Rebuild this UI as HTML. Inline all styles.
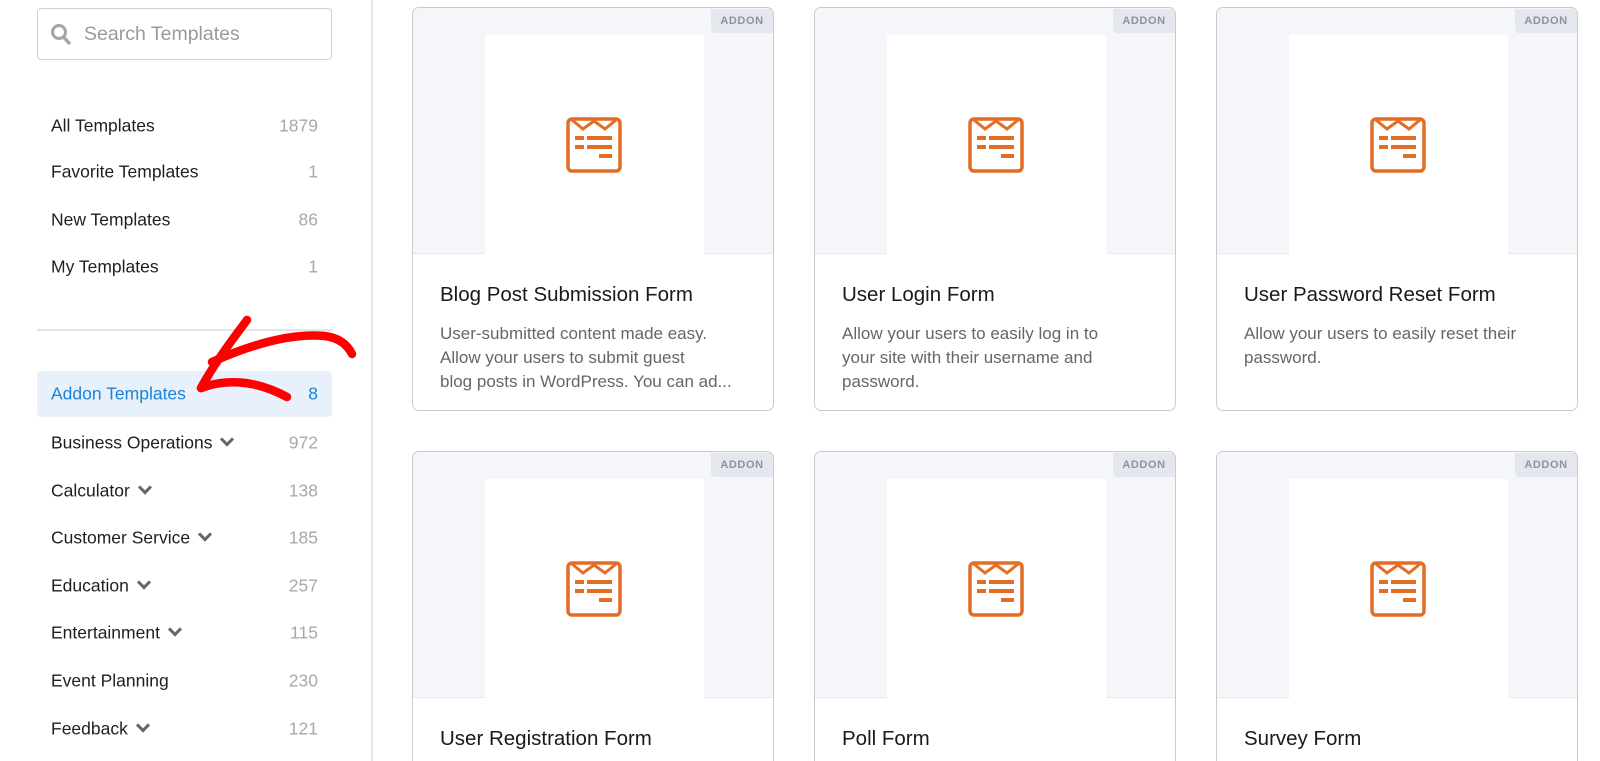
<!DOCTYPE html>
<html style="overflow:hidden;width:1600px;height:761px"><head><meta charset="utf-8"><style>
*{box-sizing:border-box;margin:0;padding:0}
body{width:1600px;height:761px;overflow:hidden;background:#fff;font-family:"Liberation Sans","DejaVu Sans",sans-serif;position:relative}
.vline{position:absolute;left:371px;top:0;width:2px;height:761px;background:#e6e6e6}
.search{position:absolute;left:37px;top:8px;width:295px;height:52px;border:1px solid #cfcfcf;border-radius:4px}
.search span{position:absolute;left:46px;top:14px;font-size:19.5px;color:#9a9a9a}
.search svg{position:absolute;left:13px;top:15px}
.item{position:absolute;left:37px;width:295px;height:46px;font-size:17.5px;color:#1f1f1f}
.item .t{position:absolute;left:14px;top:50%;transform:translateY(-50%)}
.item .n{position:absolute;right:14px;top:50%;transform:translateY(-50%);color:#a8a8a8}
.item.act{background:#e8f1fb;border-radius:4px}
.item.act .t,.item.act .n{color:#1a82d8}
.chev{display:inline-block;width:10px;height:10px;border-right:3px solid #666;border-bottom:3px solid #666;transform:rotate(45deg);margin-left:10px;position:relative;top:-4px}
.div{position:absolute;left:37px;top:329px;width:295px;height:2px;background:#e4e4e4}
.card{position:absolute;width:362px;height:404px;border:1.5px solid #cbcbcb;border-radius:7px;overflow:hidden;background:#fff}
.card.r2{height:310px;border-bottom:none;border-radius:7px 7px 0 0}
.prev{position:absolute;left:0;top:0;right:0;height:246px;background:#f4f6fa;border-bottom:1px solid #e6e9ee}
.inner{position:absolute;left:72px;top:27px;width:219px;height:219px;background:#fff}
.badge{position:absolute;right:0;top:1px;width:62px;height:24px;background:#e4e8ee;border-radius:0 0 0 4px;font-size:11px;font-weight:bold;color:#8d939b;letter-spacing:.6px;text-align:center;line-height:24px}
.icon{position:absolute;left:153px;top:109px}
.title{position:absolute;left:27px;top:275px;font-size:20.5px;color:#1a1a1a}
.desc{position:absolute;left:27px;top:314px;width:330px;font-size:17px;line-height:24px;color:#666}
</style></head><body>
<div class="vline"></div>
<div class="search"><svg width="20" height="22" viewBox="0 0 20 22"><circle cx="8" cy="8" r="6.5" fill="none" stroke="#a5a5a5" stroke-width="3"/><line x1="12.5" y1="13" x2="18" y2="19" stroke="#a5a5a5" stroke-width="3.5" stroke-linecap="round"/></svg><span>Search Templates</span></div>
<div class="item" style="top:103px"><span class="t">All Templates</span><span class="n">1879</span></div>
<div class="item" style="top:149px"><span class="t">Favorite Templates</span><span class="n">1</span></div>
<div class="item" style="top:197px"><span class="t">New Templates</span><span class="n">86</span></div>
<div class="item" style="top:244px"><span class="t">My Templates</span><span class="n">1</span></div>
<div class="div"></div>
<div class="item act" style="top:371px"><span class="t">Addon Templates</span><span class="n">8</span></div>
<div class="item" style="top:420px"><span class="t">Business Operations<i class="chev"></i></span><span class="n">972</span></div>
<div class="item" style="top:468px"><span class="t">Calculator<i class="chev"></i></span><span class="n">138</span></div>
<div class="item" style="top:515px"><span class="t">Customer Service<i class="chev"></i></span><span class="n">185</span></div>
<div class="item" style="top:563px"><span class="t">Education<i class="chev"></i></span><span class="n">257</span></div>
<div class="item" style="top:610px"><span class="t">Entertainment<i class="chev"></i></span><span class="n">115</span></div>
<div class="item" style="top:658px"><span class="t">Event Planning</span><span class="n">230</span></div>
<div class="item" style="top:706px"><span class="t">Feedback<i class="chev"></i></span><span class="n">121</span></div>

<svg style="position:absolute;left:0;top:0" width="400" height="420">
<g fill="none" stroke="#f00" stroke-width="8.5" stroke-linecap="round" stroke-linejoin="round">
<path d="M247 320 C232 340 214 364 201 388"/>
<path d="M201 388 C222 380 252 378 287 397"/>
<path d="M212 362 C250 345 290 333 325 336 C340 338 348 346 352 354"/>
</g></svg>

<div class="card" style="left:412px;top:7px"><div class="prev"><div class="inner"></div><div class="badge">ADDON</div>
<svg class="icon" width="56" height="56" viewBox="0 0 56 56"><rect x="2" y="2" width="52" height="52" rx="4" fill="none" stroke="#e36d25" stroke-width="3.5"/><path d="M6 3 L17 12 L28 4 L39 12 L50 3" fill="none" stroke="#e36d25" stroke-width="3"/><g fill="#e36d25"><rect x="9" y="19" width="9" height="4"/><rect x="21" y="19" width="25" height="4"/><rect x="9" y="28" width="9" height="4"/><rect x="21" y="28" width="25" height="4"/><rect x="33" y="37" width="13" height="4"/></g></svg></div>
<div class="title">Blog Post Submission Form</div><div class="desc">User-submitted content made easy.<br>Allow your users to submit guest<br>blog posts in WordPress. You can ad...</div></div>

<div class="card" style="left:814px;top:7px"><div class="prev"><div class="inner"></div><div class="badge">ADDON</div>
<svg class="icon" width="56" height="56" viewBox="0 0 56 56"><rect x="2" y="2" width="52" height="52" rx="4" fill="none" stroke="#e36d25" stroke-width="3.5"/><path d="M6 3 L17 12 L28 4 L39 12 L50 3" fill="none" stroke="#e36d25" stroke-width="3"/><g fill="#e36d25"><rect x="9" y="19" width="9" height="4"/><rect x="21" y="19" width="25" height="4"/><rect x="9" y="28" width="9" height="4"/><rect x="21" y="28" width="25" height="4"/><rect x="33" y="37" width="13" height="4"/></g></svg></div>
<div class="title">User Login Form</div><div class="desc">Allow your users to easily log in to<br>your site with their username and<br>password.</div></div>

<div class="card" style="left:1216px;top:7px"><div class="prev"><div class="inner"></div><div class="badge">ADDON</div>
<svg class="icon" width="56" height="56" viewBox="0 0 56 56"><rect x="2" y="2" width="52" height="52" rx="4" fill="none" stroke="#e36d25" stroke-width="3.5"/><path d="M6 3 L17 12 L28 4 L39 12 L50 3" fill="none" stroke="#e36d25" stroke-width="3"/><g fill="#e36d25"><rect x="9" y="19" width="9" height="4"/><rect x="21" y="19" width="25" height="4"/><rect x="9" y="28" width="9" height="4"/><rect x="21" y="28" width="25" height="4"/><rect x="33" y="37" width="13" height="4"/></g></svg></div>
<div class="title">User Password Reset Form</div><div class="desc">Allow your users to easily reset their<br>password.</div></div>

<div class="card r2" style="left:412px;top:451px"><div class="prev"><div class="inner"></div><div class="badge">ADDON</div>
<svg class="icon" width="56" height="56" viewBox="0 0 56 56"><rect x="2" y="2" width="52" height="52" rx="4" fill="none" stroke="#e36d25" stroke-width="3.5"/><path d="M6 3 L17 12 L28 4 L39 12 L50 3" fill="none" stroke="#e36d25" stroke-width="3"/><g fill="#e36d25"><rect x="9" y="19" width="9" height="4"/><rect x="21" y="19" width="25" height="4"/><rect x="9" y="28" width="9" height="4"/><rect x="21" y="28" width="25" height="4"/><rect x="33" y="37" width="13" height="4"/></g></svg></div>
<div class="title">User Registration Form</div></div>

<div class="card r2" style="left:814px;top:451px"><div class="prev"><div class="inner"></div><div class="badge">ADDON</div>
<svg class="icon" width="56" height="56" viewBox="0 0 56 56"><rect x="2" y="2" width="52" height="52" rx="4" fill="none" stroke="#e36d25" stroke-width="3.5"/><path d="M6 3 L17 12 L28 4 L39 12 L50 3" fill="none" stroke="#e36d25" stroke-width="3"/><g fill="#e36d25"><rect x="9" y="19" width="9" height="4"/><rect x="21" y="19" width="25" height="4"/><rect x="9" y="28" width="9" height="4"/><rect x="21" y="28" width="25" height="4"/><rect x="33" y="37" width="13" height="4"/></g></svg></div>
<div class="title">Poll Form</div></div>

<div class="card r2" style="left:1216px;top:451px"><div class="prev"><div class="inner"></div><div class="badge">ADDON</div>
<svg class="icon" width="56" height="56" viewBox="0 0 56 56"><rect x="2" y="2" width="52" height="52" rx="4" fill="none" stroke="#e36d25" stroke-width="3.5"/><path d="M6 3 L17 12 L28 4 L39 12 L50 3" fill="none" stroke="#e36d25" stroke-width="3"/><g fill="#e36d25"><rect x="9" y="19" width="9" height="4"/><rect x="21" y="19" width="25" height="4"/><rect x="9" y="28" width="9" height="4"/><rect x="21" y="28" width="25" height="4"/><rect x="33" y="37" width="13" height="4"/></g></svg></div>
<div class="title">Survey Form</div></div>
</body></html>
